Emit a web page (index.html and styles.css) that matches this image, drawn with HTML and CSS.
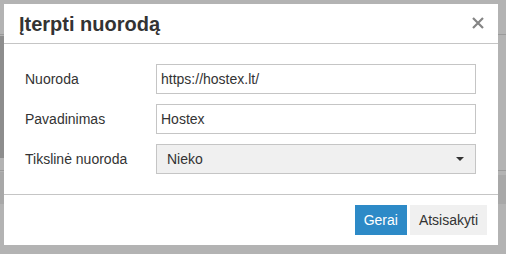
FILE: index.html
```html
<!DOCTYPE html>
<html lang="lt">
<head>
<meta charset="utf-8">
<title>Įterpti nuorodą</title>
<link rel="stylesheet" href="styles.css">
</head>
<body>
<div class="dialog">
  <div class="head">
    <div class="title">Įterpti nuorodą</div>
    <button class="close" aria-label="Uždaryti">
      <svg width="12" height="12" viewBox="0 0 12 12"><path d="M1 1 L11 11 M11 1 L1 11" stroke="#858585" stroke-width="2.2" fill="none"/></svg>
    </button>
  </div>
  <div class="body">
    <div class="row">
      <label class="lbl">Nuoroda</label>
      <div class="field">https://hostex.lt/</div>
    </div>
    <div class="row">
      <label class="lbl">Pavadinimas</label>
      <div class="field">Hostex</div>
    </div>
    <div class="row">
      <label class="lbl">Tikslinė nuoroda</label>
      <div class="field select"><span>Nieko</span><i class="caret"></i></div>
    </div>
  </div>
  <div class="foot">
    <button class="btn primary">Gerai</button>
    <button class="btn">Atsisakyti</button>
  </div>
</div>
</body>
</html>
```
FILE: styles.css
```css
html, body {
  margin: 0;
  padding: 0;
}
body {
  width: 506px;
  height: 254px;
  overflow: hidden;
  font-family: "Liberation Sans", Arial, sans-serif;
  color: #333;
  background:
    linear-gradient(#8d8d8d, #8d8d8d) 0 36px / 4px 122px no-repeat,
    linear-gradient(#999, #999) 0 34px / 4px 1px no-repeat,
    linear-gradient(#9a9a9a, #9a9a9a) 0 170px / 4px 1px no-repeat,
    linear-gradient(#a8a8a8, #a8a8a8) 0 172px / 4px 32px no-repeat,
    linear-gradient(#9a9a9a, #9a9a9a) 498px 34px / 8px 1px no-repeat,
    linear-gradient(#9a9a9a, #9a9a9a) 498px 170px / 8px 1px no-repeat,
    linear-gradient(#a8a8a8, #a8a8a8) 498px 175px / 8px 29px no-repeat,
    #b3b3b3;
}
.dialog {
  margin: 4px 0 0 4px;
  width: 494px;
  height: 241px;
  background: #fff;
  display: flex;
  flex-direction: column;
  box-sizing: border-box;
}
.head {
  height: 39px;
  border-bottom: 1px solid #c5c5c5;
  display: flex;
  align-items: center;
  justify-content: space-between;
  padding: 0 14px 0 15px;
}
.title {
  font-size: 20px;
  font-weight: bold;
  color: #333;
  line-height: 24px;
}
.close {
  border: 0;
  background: none;
  padding: 0;
  width: 12px;
  height: 12px;
  display: flex;
  margin-top: -1px;
}
.body {
  padding: 20px 20px 20px 21px;
  display: flex;
  flex-direction: column;
  gap: 10px;
  border-bottom: 1px solid #c5c5c5;
}
.row {
  display: grid;
  grid-template-columns: 131px 320px;
  align-items: center;
  height: 30px;
}
.lbl {
  font-size: 14px;
  color: #333;
}
.field {
  height: 30px;
  box-sizing: border-box;
  border: 1px solid #c5c5c5;
  padding: 0 4px;
  font-size: 14px;
  line-height: 28px;
  color: #333;
  background: #fff;
}
.field.select {
  background: #f0f0f0;
  padding: 0 10px;
  display: flex;
  align-items: center;
  justify-content: space-between;
}
.caret {
  width: 0;
  height: 0;
  border-top: 4px solid #333;
  border-left: 4px solid transparent;
  border-right: 4px solid transparent;
  margin-right: 1px;
}
.foot {
  flex: 1;
  display: flex;
  justify-content: flex-end;
  align-items: center;
  gap: 3px;
  padding: 0 11px 0 10px;
}
.btn {
  height: 30px;
  border: 0;
  padding: 0 9px;
  font-family: "Liberation Sans", Arial, sans-serif;
  font-size: 14px;
  color: #333;
  background: #f0f0f0;
}
.btn.primary {
  background: #2d8ac7;
  color: #fff;
}
```
